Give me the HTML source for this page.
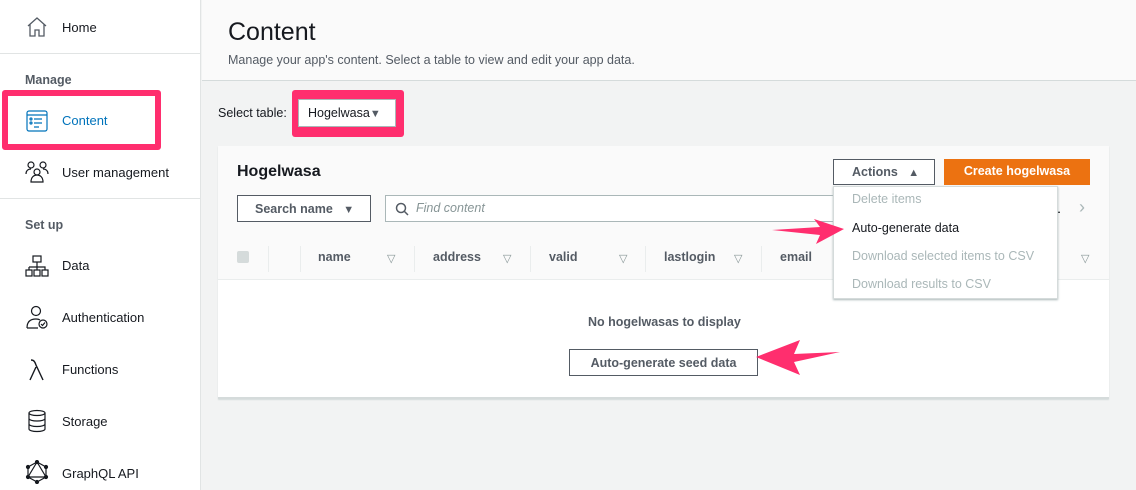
<!DOCTYPE html>
<html><head><style>
*{margin:0;padding:0;box-sizing:border-box}
body{width:1136px;height:490px;overflow:hidden;font-family:"Liberation Sans",sans-serif;background:#f2f3f3;position:relative;color:#16191f}
.a{position:absolute}
.side{left:0;top:0;width:201px;height:490px;background:#fff;border-right:1px solid #e1e4e4}
.nav{position:absolute;left:62px;font-size:13px;color:#16191f}
.ic{position:absolute;left:25px;width:24px;height:24px}
.sec{position:absolute;left:25px;font-size:12.5px;font-weight:bold;color:#545b64}
.hr{position:absolute;left:0;width:201px;height:1px;background:#e1e4e4}
.th{position:absolute;top:250px;font-size:12.5px;font-weight:bold;color:#545b64}
.sep{position:absolute;top:246px;width:1px;height:26px;background:#eaeded}
.tri{position:absolute;top:252px;font-size:11px;color:#879596}
.mi{position:absolute;left:852px;font-size:12.5px;color:#aab7b8}
.dn{font-size:11px}
</style></head><body>
<div class="a" style="left:202px;top:0;width:934px;height:81px;background:#fafafa;border-bottom:1px solid #d5dbdb"></div>
<div class="a" style="left:228px;top:18px;font-size:25px;color:#16191f">Content</div>
<div class="a" style="left:228px;top:53px;font-size:12.5px;color:#545b64">Manage your app's content. Select a table to view and edit your app data.</div>

<div class="a side"></div>
<svg class="ic" style="top:15px" viewBox="0 0 24 24" fill="none" stroke="#545b64" stroke-width="1.3"><path d="M3 11L12 3l9 8M5 9v12h5v-6h4v6h5V9"/></svg>
<div class="nav" style="top:20px">Home</div>
<div class="hr" style="top:53px"></div>
<div class="sec" style="top:73px">Manage</div>
<div class="a" style="left:2px;top:90px;width:159px;height:60px;border:6px solid #ff2e6e;border-radius:3px"></div>
<svg class="ic" style="top:109px" viewBox="0 0 24 24" fill="none" stroke="#0073bb" stroke-width="1.2"><rect x="2" y="2" width="20" height="20" rx="2"/><path d="M2 6h20M9 10h8M9 14h8M9 18h5"/><circle cx="6" cy="10" r="1"/><circle cx="6" cy="14" r="1"/></svg>
<div class="nav" style="top:113px;color:#0073bb">Content</div>
<svg class="ic" style="top:160px" viewBox="0 0 24 24" fill="none" stroke="#16191f" stroke-width="1.2"><circle cx="6" cy="5" r="3"/><circle cx="18" cy="5" r="3"/><circle cx="12" cy="12" r="3"/><path d="M1 14c0-4 3-5 5-5M23 14c0-4-3-5-5-5M6 22c0-5 3-7 6-7s6 2 6 7z"/></svg>
<div class="nav" style="top:165px">User management</div>
<div class="hr" style="top:198px"></div>
<div class="sec" style="top:218px">Set up</div>
<svg class="ic" style="top:254px" viewBox="0 0 24 24" fill="none" stroke="#16191f" stroke-width="1.2"><rect x="8" y="2" width="8" height="6"/><path d="M12 8v5M4 13h16v3M4 13v3M12 13v3"/><rect x="1" y="16" width="6" height="6"/><rect x="9" y="16" width="6" height="6"/><rect x="17" y="16" width="6" height="6"/></svg>
<div class="nav" style="top:258px">Data</div>
<svg class="ic" style="top:305px" viewBox="0 0 24 24" fill="none" stroke="#16191f" stroke-width="1.2"><circle cx="11" cy="6" r="4.5"/><path d="M2 23c0-7 4-9 9-9 2 0 3 .3 4 1M2 23h11"/><circle cx="18" cy="19" r="4"/><path d="M16 19l1.5 1.5 2.5-3"/></svg>
<div class="nav" style="top:310px">Authentication</div>
<svg class="ic" style="top:358px" viewBox="0 0 24 24" fill="none" stroke="#16191f" stroke-width="1.4"><path d="M6 2c3 0 4 2 5 5l7 15M11 9L5 22"/></svg>
<div class="nav" style="top:362px">Functions</div>
<svg class="ic" style="top:409px" viewBox="0 0 24 24" fill="none" stroke="#16191f" stroke-width="1.2"><ellipse cx="12" cy="4" rx="8" ry="2.5"/><path d="M4 4v16c0 1.4 3.6 2.5 8 2.5s8-1.1 8-2.5V4M4 9.5c0 1.4 3.6 2.5 8 2.5s8-1.1 8-2.5M4 15c0 1.4 3.6 2.5 8 2.5s8-1.1 8-2.5"/></svg>
<div class="nav" style="top:414px">Storage</div>
<svg class="ic" style="top:460px" viewBox="0 0 24 24" fill="none" stroke="#16191f" stroke-width="1.2"><path d="M12 2l9 5v10l-9 5-9-5V7zM12 2L3 17h18z"/><circle cx="12" cy="2" r="1.5" fill="#16191f"/><circle cx="3" cy="7" r="1.5" fill="#16191f"/><circle cx="21" cy="7" r="1.5" fill="#16191f"/><circle cx="3" cy="17" r="1.5" fill="#16191f"/><circle cx="21" cy="17" r="1.5" fill="#16191f"/><circle cx="12" cy="22" r="1.5" fill="#16191f"/></svg>
<div class="nav" style="top:466px">GraphQL API</div>

<div class="a" style="left:218px;top:106px;font-size:12.5px;color:#16191f">Select table:</div>
<div class="a" style="left:292px;top:90px;width:112px;height:47px;background:#ff2e6e;border-radius:3px"></div>
<div class="a" style="left:298px;top:99px;width:98px;height:28px;background:#fff;border:1px solid #aab7b8;font-size:12.5px;padding:6px 0 0 9px">Hogelwasa<span class="dn" style="color:#545b64">▼</span></div>

<div class="a" style="left:218px;top:146px;width:891px;height:253px;background:#fff;border-bottom:2px solid #d5dbdb;box-shadow:0 1px 1px #d5dbdb"></div>
<div class="a" style="left:218px;top:146px;width:891px;height:134px;background:#fafafa;border-bottom:1px solid #eaeded"></div>
<div class="a" style="left:237px;top:163px;font-size:16px;font-weight:bold">Hogelwasa</div>
<div class="a" style="left:833px;top:159px;width:102px;height:26px;border:1px solid #545b64;background:#fff;font-size:12.5px;font-weight:bold;color:#545b64;padding:5px 0 0 18px">Actions &nbsp;&nbsp;<span class="dn">▲</span></div>
<div class="a" style="left:944px;top:159px;width:146px;height:26px;background:#ec7211;color:#fff;font-size:12.5px;font-weight:bold;text-align:center;padding-top:5px">Create hogelwasa</div>
<div class="a" style="left:237px;top:195px;width:134px;height:27px;border:1px solid #545b64;background:#fff;font-size:12.5px;font-weight:bold;color:#545b64;padding:6px 0 0 17px">Search name &nbsp;&nbsp;<span class="dn">▼</span></div>
<div class="a" style="left:385px;top:195px;width:460px;height:27px;border:1px solid #aab7b8;background:#fff"></div>
<svg class="a" style="left:395px;top:202px" width="14" height="14" viewBox="0 0 14 14" fill="none" stroke="#545b64" stroke-width="1.5"><circle cx="6" cy="6" r="4.5"/><path d="M9.5 9.5L13 13"/></svg>
<div class="a" style="left:416px;top:201px;font-size:12.5px;font-style:italic;color:#879596">Find content</div>
<div class="a" style="left:1053px;top:201px;font-size:13px;font-weight:bold">1</div>
<div class="a" style="left:1079px;top:197px;font-size:18px;color:#aab7b8">›</div>
<div class="a" style="left:237px;top:251px;width:12px;height:12px;background:#d5dbdb;border-radius:2px"></div>
<div class="sep" style="left:268px"></div><div class="sep" style="left:300px"></div>
<div class="th" style="left:318px">name</div><div class="tri" style="left:387px">▽</div><div class="sep" style="left:414px"></div>
<div class="th" style="left:433px">address</div><div class="tri" style="left:503px">▽</div><div class="sep" style="left:530px"></div>
<div class="th" style="left:549px">valid</div><div class="tri" style="left:619px">▽</div><div class="sep" style="left:645px"></div>
<div class="th" style="left:664px">lastlogin</div><div class="tri" style="left:734px">▽</div><div class="sep" style="left:761px"></div>
<div class="th" style="left:780px">email</div><div class="tri" style="left:1081px">▽</div>
<div class="a" style="left:588px;top:315px;font-size:12.5px;font-weight:bold;color:#545b64">No hogelwasas to display</div>
<div class="a" style="left:569px;top:349px;width:189px;height:27px;border:1px solid #545b64;background:#fff;font-size:12.5px;font-weight:bold;color:#545b64;text-align:center;padding-top:6px">Auto-generate seed data</div>

<div class="a" style="left:833px;top:186px;width:225px;height:113px;background:#fff;border:1px solid #d5dbdb;box-shadow:0 1px 2px #aab7b8"></div>
<div class="mi" style="top:192px">Delete items</div>
<div class="mi" style="top:221px;color:#16191f">Auto-generate data</div>
<div class="mi" style="top:249px">Download selected items to CSV</div>
<div class="mi" style="top:277px">Download results to CSV</div>

<svg class="a" style="left:760px;top:210px" width="90" height="40"><path d="M12 20L60 17 54 9 84 19 56 34 60 25z" fill="#ff2e6e"/></svg>
<svg class="a" style="left:752px;top:335px" width="90" height="44"><path d="M88 17L42 19 48 5 4 22 48 40 42 27z" fill="#ff2e6e"/></svg>
</body></html>
